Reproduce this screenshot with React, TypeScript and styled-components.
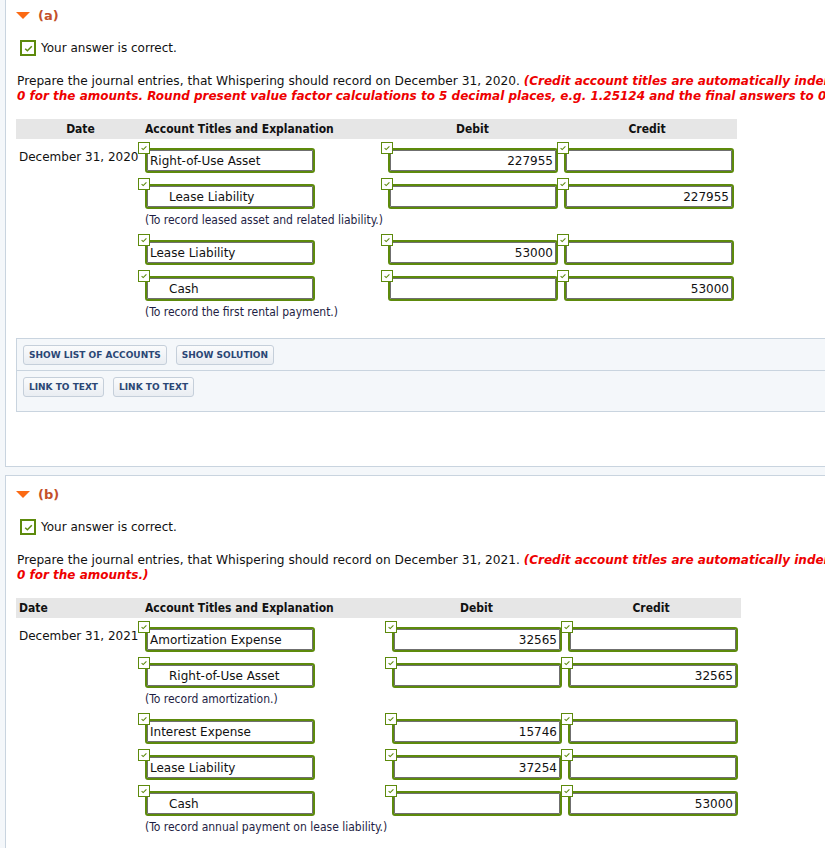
import React from "react";
import styled, { createGlobalStyle } from "styled-components";

const GlobalStyle = createGlobalStyle`
  body {
    margin: 0;
    background: #f4f7fa;
    font-family: "DejaVu Sans", Verdana, sans-serif;
    color: #111;
    overflow: hidden;
  }
`;

type Line = {
  account: string;
  indent?: boolean;
  debit?: string;
  credit?: string;
};

type Entry = { lines: Line[]; note: string };

type Part = {
  label: string;
  date: string;
  lead: string;
  redTop: string;
  redBottom: string;
  dateAlign: "center" | "left";
  accountCol: number;
  entries: Entry[];
  tools?: boolean;
};

const parts: Part[] = [
  {
    label: "(a)",
    date: "December 31, 2020",
    lead: "Prepare the journal entries, that Whispering should record on December 31, 2020.",
    redTop:
      "(Credit account titles are automatically indented when amount is entered. Do not indent manually. If no entry is required, select \"No Entry\" for the account titles and enter",
    redBottom:
      "0 for the amounts. Round present value factor calculations to 5 decimal places, e.g. 1.25124 and the final answers to 0 decimal places, e.g. 5,275.)",
    dateAlign: "center",
    accountCol: 243,
    tools: true,
    entries: [
      {
        lines: [
          { account: "Right-of-Use Asset", debit: "227955" },
          { account: "Lease Liability", indent: true, credit: "227955" },
        ],
        note: "(To record leased asset and related liability.)",
      },
      {
        lines: [
          { account: "Lease Liability", debit: "53000" },
          { account: "Cash", indent: true, credit: "53000" },
        ],
        note: "(To record the first rental payment.)",
      },
    ],
  },
  {
    label: "(b)",
    date: "December 31, 2021",
    lead: "Prepare the journal entries, that Whispering should record on December 31, 2021.",
    redTop:
      "(Credit account titles are automatically indented when amount is entered. Do not indent manually. If no entry is required, select \"No Entry\" for the account titles and enter",
    redBottom: "0 for the amounts.)",
    dateAlign: "left",
    accountCol: 247,
    entries: [
      {
        lines: [
          { account: "Amortization Expense", debit: "32565" },
          { account: "Right-of-Use Asset", indent: true, credit: "32565" },
        ],
        note: "(To record amortization.)",
      },
      {
        lines: [
          { account: "Interest Expense", debit: "15746" },
          { account: "Lease Liability", debit: "37254" },
          { account: "Cash", indent: true, credit: "53000" },
        ],
        note: "(To record annual payment on lease liability.)",
      },
    ],
  },
];

const Page = styled.div`
  width: 1100px;
  margin-top: -4px;
  padding-left: 5px;
`;

const Panel = styled.section<{ $tail?: number }>`
  background: #fff;
  border: 1px solid #c9d4df;
  padding: 8px 0 ${(p) => p.$tail ?? 60}px 10px;
  & + & {
    margin-top: 8px;
  }
`;

const Title = styled.div`
  display: flex;
  align-items: center;
  height: 20px;
  gap: 8px;
  font-family: Tahoma, "DejaVu Sans", sans-serif;
  font-weight: bold;
  font-size: 13px;
  color: #c4502a;
`;

const Triangle = styled.span`
  width: 0;
  height: 0;
  border-left: 7px solid transparent;
  border-right: 7px solid transparent;
  border-top: 7px solid #fb6a14;
`;

const Correct = styled.div`
  display: flex;
  align-items: center;
  gap: 5px;
  margin: 15px 0 0 4px;
  height: 16px;
  font-size: 12px;
`;

const BigCheck = styled.span`
  width: 12px;
  height: 12px;
  border: 2px solid #5d8a0c;
  background: #fff;
  display: flex;
  align-items: center;
  justify-content: center;
`;

const Lead = styled.p`
  margin: 18px 0 0 1px;
  font-size: 12.2px;
  line-height: 15px;
  white-space: nowrap;
`;

const Red = styled.span`
  color: #ee0000;
  font-style: italic;
  font-weight: bold;
  font-size: 12px;
`;

const Table = styled.div<{ $acc: number }>`
  margin-top: 15px;
  display: grid;
  grid-template-columns: 129px ${(p) => p.$acc}px 176px 173px;
  width: fit-content;
`;

const HeadCell = styled.div<{ $align?: "center" | "left" }>`
  background: #e6e6e6;
  height: 20px;
  line-height: 20px;
  font-family: "DejaVu Sans Condensed", "DejaVu Sans", sans-serif;
  font-size: 12px;
  font-weight: bold;
  text-align: ${(p) => p.$align ?? "left"};
  padding-left: ${(p) => (p.$align === "left" ? "3px" : "0")};
`;

const NumHead = styled(HeadCell)`
  text-align: center;
  padding-right: 7px;
`;

const DateCell = styled.div`
  padding: 10px 0 0 3px;
  font-size: 12px;
  line-height: 16px;
  white-space: nowrap;
`;

const Cell = styled.div<{ $first?: boolean }>`
  padding-top: ${(p) => (p.$first ? 9 : 11)}px;
`;

const FieldWrap = styled.div`
  position: relative;
  width: 170px;
`;

const Field = styled.div<{ $indent?: boolean; $num?: boolean }>`
  box-sizing: border-box;
  height: 25px;
  border: 2px solid #5d8a0c;
  border-radius: 3px;
  box-shadow: inset 0 0 0 1px #6f6f6f;
  background: #fff;
  font-size: 12px;
  line-height: 22px;
  white-space: nowrap;
  text-align: ${(p) => (p.$num ? "right" : "left")};
  padding: 0 ${(p) => (p.$num ? 3 : 0)}px 0 ${(p) => (p.$indent ? 22 : p.$num ? 0 : 3)}px;
`;

const Tick = styled.span`
  position: absolute;
  left: -7px;
  top: -6px;
  width: 10px;
  height: 10px;
  border: 1px solid #5d8a0c;
  background: #fff;
  display: flex;
  align-items: center;
  justify-content: center;
`;

const Note = styled.div`
  grid-column: 2 / 5;
  font-family: "DejaVu Sans Condensed", "DejaVu Sans", sans-serif;
  font-size: 12px;
  padding-top: 3px;
  line-height: 17px;
  color: #1e1e44;
`;

const Tools = styled.div`
  margin-top: 17px;
  background: #f4f7fa;
  border: 1px solid #c9d4df;
  border-right: none;
`;

const ToolRow = styled.div<{ $bottom: number }>`
  display: flex;
  gap: 9px;
  padding: 6px 6px ${(p) => p.$bottom}px;
  & + & {
    border-top: 1px solid #c9d4df;
  }
`;

const ToolButton = styled.button`
  height: 20px;
  padding: 0 5px;
  border: 1px solid #c5cfda;
  border-radius: 3px;
  background: linear-gradient(#fafbfc, #e9edf2);
  color: #2b4775;
  font-family: "DejaVu Sans", Verdana, sans-serif;
  font-size: 9px;
  font-weight: bold;
  white-space: nowrap;
`;

const CheckMark = ({ size }: { size: number }) => (
  <svg width={size} height={size} viewBox="0 0 10 10">
    <polyline points="2,5.2 4,7 8,3" fill="none" stroke="#5d8a0c" strokeWidth="1.4" />
  </svg>
);

const Input = ({ value, num, indent }: { value: string; num?: boolean; indent?: boolean }) => (
  <FieldWrap>
    <Field $num={num} $indent={indent}>
      {value}
    </Field>
    <Tick>
      <CheckMark size={8} />
    </Tick>
  </FieldWrap>
);

const Journal = ({ part }: { part: Part }) => {
  let first = true;
  return (
    <Table $acc={part.accountCol}>
      <HeadCell $align={part.dateAlign}>Date</HeadCell>
      <HeadCell>Account Titles and Explanation</HeadCell>
      <NumHead>Debit</NumHead>
      <NumHead>Credit</NumHead>
      {part.entries.map((entry, ei) => (
        <React.Fragment key={ei}>
          {entry.lines.map((line, li) => {
            const isFirst = first;
            first = false;
            return (
              <React.Fragment key={li}>
                <DateCell>{isFirst ? part.date : ""}</DateCell>
                <Cell $first={isFirst}>
                  <Input value={line.account} indent={line.indent} />
                </Cell>
                <Cell $first={isFirst}>
                  <Input value={line.debit ?? ""} num />
                </Cell>
                <Cell $first={isFirst}>
                  <Input value={line.credit ?? ""} num />
                </Cell>
              </React.Fragment>
            );
          })}
          <div />
          <Note>{entry.note}</Note>
        </React.Fragment>
      ))}
    </Table>
  );
};

const App = () => {
  return (
    <>
      <GlobalStyle />
      <Page>
        {parts.map((part) => (
          <Panel key={part.label} $tail={part.tools ? 54 : 60}>
            <Title>
              <Triangle />
              {part.label}
            </Title>
            <Correct>
              <BigCheck>
                <CheckMark size={11} />
              </BigCheck>
              Your answer is correct.
            </Correct>
            <Lead>
              {part.lead} <Red>{part.redTop}</Red>
              <br />
              <Red>{part.redBottom}</Red>
            </Lead>
            <Journal part={part} />
            {part.tools && (
              <Tools>
                <ToolRow $bottom={5}>
                  <ToolButton>SHOW LIST OF ACCOUNTS</ToolButton>
                  <ToolButton>SHOW SOLUTION</ToolButton>
                </ToolRow>
                <ToolRow $bottom={14}>
                  <ToolButton>LINK TO TEXT</ToolButton>
                  <ToolButton>LINK TO TEXT</ToolButton>
                </ToolRow>
              </Tools>
            )}
          </Panel>
        ))}
      </Page>
    </>
  );
};

export default App;
